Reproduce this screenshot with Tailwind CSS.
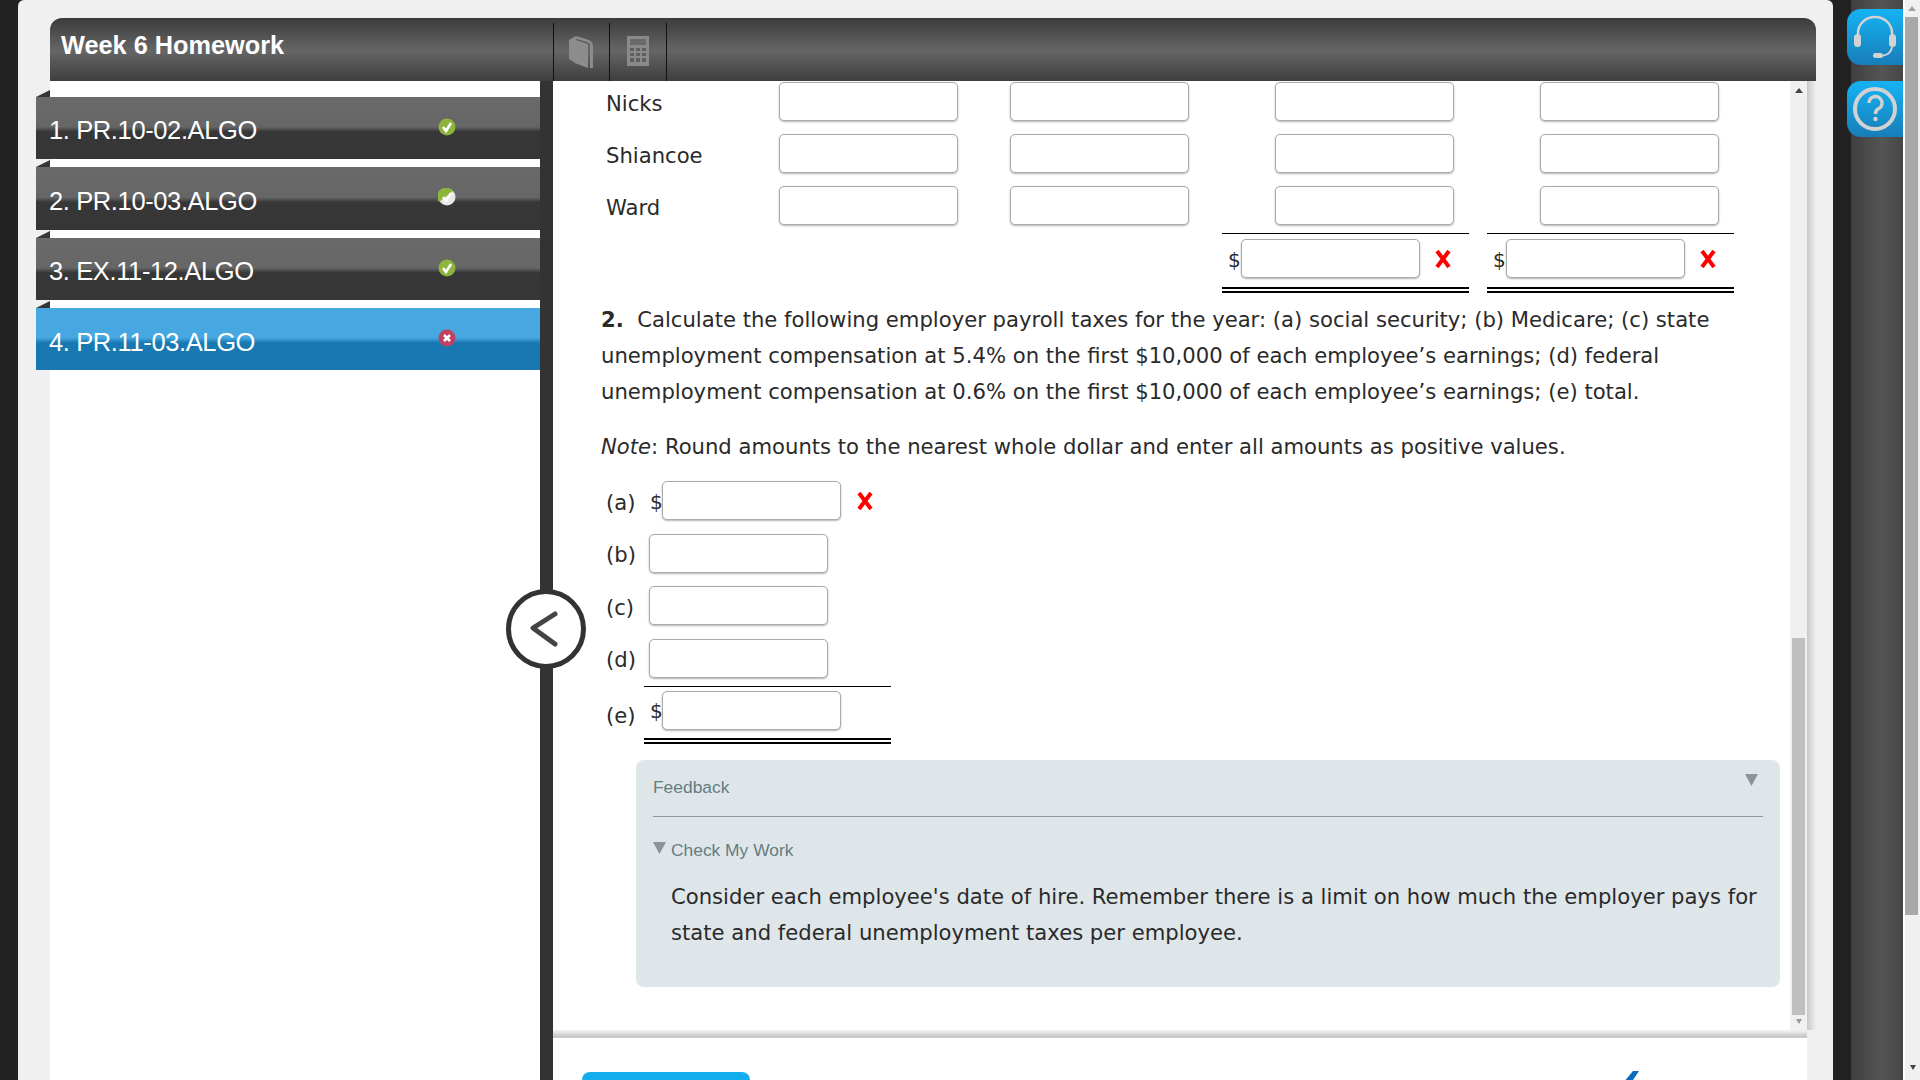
<!doctype html>
<html><head><meta charset="utf-8"><script src="https://cdn.jsdelivr.net/npm/@tailwindcss/browser@4"></script></head>
<body class="m-0 overflow-hidden">
<div class="flex w-[1920px] h-[1080px] overflow-hidden bg-[#222] font-['DejaVu_Sans',sans-serif] text-[21.15px] leading-[36px] text-[#2a2a2a]">
  <div class="w-[18px] shrink-0 bg-[#222]"></div>
  <div class="w-[1815px] shrink-0 bg-[#f0f0f0] rounded-t-[6px] pl-[32px] pr-[17px] pt-[18px] flex flex-col">
    <!-- header -->
    <div class="h-[63px] shrink-0 flex rounded-t-[12px] bg-[linear-gradient(#3b3b3b,#666_52%,#5d5d5d_62%,#3e3e3e)]">
      <div class="w-[503px] shrink-0 pl-[11px] pt-[9px] font-['Liberation_Sans',sans-serif] font-bold text-[25.3px] leading-[36px] text-white">Week 6 Homework</div>
      <div class="w-[57px] h-[58px] mt-[5px] border-x border-[#111] flex items-center justify-center">
        <svg class="-ml-[2px]" width="26" height="34" viewBox="0 0 26 34"><path d="M1 5 L8 1 L21 5 Q25 7 25 11 L25 33 L22 33 L22 10 Q22 8 19 7 L8 4 L8 5 L20 9 L20 33 L7 28 L1 24 Z" fill="#8c8c8c"/></svg>
      </div>
      <div class="w-[57px] h-[58px] mt-[5px] border-r border-[#111] flex items-center justify-center">
        <svg class="-mt-[2px]" width="22" height="30" viewBox="0 0 22 30"><rect width="22" height="30" fill="#8a8a8a"/><rect x="3" y="3" width="16" height="6" fill="#6a6a6a"/><g fill="#5f5f5f"><rect x="3" y="12" width="4" height="3"/><rect x="9" y="12" width="4" height="3"/><rect x="15" y="12" width="4" height="3"/><rect x="3" y="17" width="4" height="3"/><rect x="9" y="17" width="4" height="3"/><rect x="15" y="17" width="4" height="3"/><rect x="3" y="22" width="4" height="4"/><rect x="9" y="22" width="4" height="4"/><rect x="15" y="22" width="4" height="4"/></g></svg>
      </div>
    </div>
    <!-- body -->
    <div class="flex-1 flex min-h-0 relative">
      <!-- sidebar -->
      <div class="w-[490px] shrink-0 bg-white pt-[16px] flex flex-col gap-[8.2px] font-['Liberation_Sans',sans-serif] text-[25.5px] tracking-[-0.38px] text-white">
        <div class="relative -ml-[14px] h-[62.2px] bg-[linear-gradient(#6a6a6a,#666_48%,#373737_56%,#363636)] flex items-center pl-[13px] pt-[3px]">
          <div class="absolute left-0 -top-[7px] w-0 h-0 border-l-[14px] border-l-transparent border-b-[7px] border-b-[#363636]"></div>
          <span>1. PR.10-02.ALGO</span>
          <svg class="absolute left-[402px] top-[21px]" width="18" height="18" viewBox="0 0 18 18"><circle cx="9" cy="9" r="8.5" fill="#8db43c"/><path d="M5 9 L8 13 L13 5" fill="none" stroke="#fff" stroke-width="2.6"/></svg>
        </div>
        <div class="relative -ml-[14px] h-[62.2px] bg-[linear-gradient(#6a6a6a,#666_48%,#373737_56%,#363636)] flex items-center pl-[13px] pt-[5px]">
          <div class="absolute left-0 -top-[7px] w-0 h-0 border-l-[14px] border-l-transparent border-b-[7px] border-b-[#363636]"></div>
          <span>2. PR.10-03.ALGO</span>
          <svg class="absolute left-[402px] top-[21px]" width="18" height="18" viewBox="0 0 18 18"><circle cx="9" cy="9" r="8.5" fill="#e8e8e8"/><path d="M1 14 A8.5 8.5 0 0 1 15 3 Z" fill="#8db43c"/><path d="M5 9 L8 13 L13 5" fill="none" stroke="#fff" stroke-width="2.4"/></svg>
        </div>
        <div class="relative -ml-[14px] h-[62.2px] bg-[linear-gradient(#6a6a6a,#666_48%,#373737_56%,#363636)] flex items-center pl-[13px] pt-[5px]">
          <div class="absolute left-0 -top-[7px] w-0 h-0 border-l-[14px] border-l-transparent border-b-[7px] border-b-[#363636]"></div>
          <span>3. EX.11-12.ALGO</span>
          <svg class="absolute left-[402px] top-[21px]" width="18" height="18" viewBox="0 0 18 18"><circle cx="9" cy="9" r="8.5" fill="#8db43c"/><path d="M5 9 L8 13 L13 5" fill="none" stroke="#fff" stroke-width="2.6"/></svg>
        </div>
        <div class="relative -ml-[14px] h-[62.2px] bg-[linear-gradient(#47a7e0,#47a7e0_48%,#1879b2_56%,#1879b2)] flex items-center pl-[13px] pt-[5px]">
          <div class="absolute left-0 -top-[7px] w-0 h-0 border-l-[14px] border-l-transparent border-b-[7px] border-b-[#363636]"></div>
          <span>4. PR.11-03.ALGO</span>
          <svg class="absolute left-[402px] top-[21px]" width="18" height="18" viewBox="0 0 18 18"><circle cx="9" cy="9" r="8.5" fill="#c0405f"/><path d="M6 6 L12 12 M12 6 L6 12" fill="none" stroke="#fff" stroke-width="2.6"/></svg>
        </div>
      </div>
      <div class="w-[13px] shrink-0 bg-[#333]"></div>
      <!-- collapse handle -->
      <div class="absolute left-[456px] top-[508px] w-[80px] h-[80px] rounded-full bg-white border-[5px] border-[#333] flex items-center justify-center">
        <svg class="-ml-[5px]" width="30" height="36" viewBox="0 0 30 36"><path d="M26 3 L4 17 L26 33" fill="none" stroke="#444" stroke-width="5" stroke-linecap="round" stroke-linejoin="round"/></svg>
      </div>
      <!-- main -->
      <div class="w-[1263px] shrink-0 flex flex-col min-h-0">
        <div class="h-[949px] shrink-0 flex bg-[#c9c9c9]">
          <div class="w-[1237px] shrink-0 bg-white pt-px pl-[48px] overflow-hidden">
            <div class="flex flex-col gap-[13px]">
              <div class="flex h-[39px] items-center"><div class="w-[178px] pl-[5px] pt-[5px]">Nicks</div><input class="w-[179px] h-[39px] bg-white border border-[#aaa] rounded-[5px] shadow-[0_1px_2px_rgba(0,0,0,0.3)]"><input class="w-[179px] h-[39px] ml-[52px] bg-white border border-[#aaa] rounded-[5px] shadow-[0_1px_2px_rgba(0,0,0,0.3)]"><input class="w-[179px] h-[39px] ml-[86px] bg-white border border-[#aaa] rounded-[5px] shadow-[0_1px_2px_rgba(0,0,0,0.3)]"><input class="w-[179px] h-[39px] ml-[86px] bg-white border border-[#aaa] rounded-[5px] shadow-[0_1px_2px_rgba(0,0,0,0.3)]"></div>
              <div class="flex h-[39px] items-center"><div class="w-[178px] pl-[5px] pt-[5px]">Shiancoe</div><input class="w-[179px] h-[39px] bg-white border border-[#aaa] rounded-[5px] shadow-[0_1px_2px_rgba(0,0,0,0.3)]"><input class="w-[179px] h-[39px] ml-[52px] bg-white border border-[#aaa] rounded-[5px] shadow-[0_1px_2px_rgba(0,0,0,0.3)]"><input class="w-[179px] h-[39px] ml-[86px] bg-white border border-[#aaa] rounded-[5px] shadow-[0_1px_2px_rgba(0,0,0,0.3)]"><input class="w-[179px] h-[39px] ml-[86px] bg-white border border-[#aaa] rounded-[5px] shadow-[0_1px_2px_rgba(0,0,0,0.3)]"></div>
              <div class="flex h-[39px] items-center"><div class="w-[178px] pl-[5px] pt-[5px]">Ward</div><input class="w-[179px] h-[39px] bg-white border border-[#aaa] rounded-[5px] shadow-[0_1px_2px_rgba(0,0,0,0.3)]"><input class="w-[179px] h-[39px] ml-[52px] bg-white border border-[#aaa] rounded-[5px] shadow-[0_1px_2px_rgba(0,0,0,0.3)]"><input class="w-[179px] h-[39px] ml-[86px] bg-white border border-[#aaa] rounded-[5px] shadow-[0_1px_2px_rgba(0,0,0,0.3)]"><input class="w-[179px] h-[39px] ml-[86px] bg-white border border-[#aaa] rounded-[5px] shadow-[0_1px_2px_rgba(0,0,0,0.3)]"></div>
            </div>
            <div class="flex mt-[8px] ml-[621px] gap-[18px]">
              <div class="w-[247px] h-[60px] border-t border-t-black border-b-[6px] border-b-black [border-bottom-style:double] flex items-center pl-[6px] pb-[4px]"><span class="w-[13px] text-[20px] pt-[2px]">$</span><input class="w-[179px] h-[39px] bg-white border border-[#aaa] rounded-[5px] shadow-[0_1px_2px_rgba(0,0,0,0.3)]"><svg class="ml-[15px]" width="16" height="18" viewBox="0 0 16 18"><path d="M2 1 L14 17 M14 1 L2 17" stroke="#f00" stroke-width="4"/></svg></div>
              <div class="w-[247px] h-[60px] border-t border-t-black border-b-[6px] border-b-black [border-bottom-style:double] flex items-center pl-[6px] pb-[4px]"><span class="w-[13px] text-[20px] pt-[2px]">$</span><input class="w-[179px] h-[39px] bg-white border border-[#aaa] rounded-[5px] shadow-[0_1px_2px_rgba(0,0,0,0.3)]"><svg class="ml-[15px]" width="16" height="18" viewBox="0 0 16 18"><path d="M2 1 L14 17 M14 1 L2 17" stroke="#f00" stroke-width="4"/></svg></div>
            </div>
            <p class="mt-[9px] w-[1150px]"><b>2.</b>&nbsp; Calculate the following employer payroll taxes for the year: (a) social security; (b) Medicare; (c) state unemployment compensation at 5.4% on the first $10,000 of each employee’s earnings; (d) federal unemployment compensation at 0.6% on the first $10,000 of each employee’s earnings; (e) total.</p>
            <p class="mt-[19px]"><i>Note</i>: Round amounts to the nearest whole dollar and enter all amounts as positive values.</p>
            <div class="mt-[16px] ml-[5px] flex flex-col gap-[13.5px]">
              <div class="flex h-[39px] items-center"><span class="w-[44px] pt-[4px]">(a)</span><span class="w-[12px] pt-[2px] text-[20px]">$</span><input class="w-[179px] h-[39px] bg-white border border-[#aaa] rounded-[5px] shadow-[0_1px_2px_rgba(0,0,0,0.3)]"><svg class="ml-[16px]" width="16" height="18" viewBox="0 0 16 18"><path d="M2 1 L14 17 M14 1 L2 17" stroke="#f00" stroke-width="4"/></svg></div>
              <div class="flex h-[39px] items-center"><span class="w-[43px] pt-[4px]">(b)</span><input class="w-[179px] h-[39px] bg-white border border-[#aaa] rounded-[5px] shadow-[0_1px_2px_rgba(0,0,0,0.3)]"></div>
              <div class="flex h-[39px] items-center"><span class="w-[43px] pt-[4px]">(c)</span><input class="w-[179px] h-[39px] bg-white border border-[#aaa] rounded-[5px] shadow-[0_1px_2px_rgba(0,0,0,0.3)]"></div>
              <div class="flex h-[39px] items-center"><span class="w-[43px] pt-[4px]">(d)</span><input class="w-[179px] h-[39px] bg-white border border-[#aaa] rounded-[5px] shadow-[0_1px_2px_rgba(0,0,0,0.3)]"></div>
            </div>
            <div class="flex items-center mt-[8px] ml-[5px]">
              <span class="w-[38px] pt-[2px]">(e)</span>
              <div class="w-[247px] h-[58px] border-t border-t-black border-b-[6px] border-b-black [border-bottom-style:double] flex items-center pl-[6px] pb-[3px]"><span class="w-[12px] text-[20px]">$</span><input class="w-[179px] h-[39px] bg-white border border-[#aaa] rounded-[5px] shadow-[0_1px_2px_rgba(0,0,0,0.3)]"></div>
            </div>
            <div class="relative ml-[35px] mt-[16px] w-[1144px] h-[227px] rounded-[8px] bg-[#dfe6e9] px-[17px] pt-[15px]">
              <div class="font-['Liberation_Sans',sans-serif] text-[17.4px] leading-[24px] text-[#647c82] h-[42px] border-b border-[#8f989b]">Feedback</div>
              <svg class="absolute right-[22px] top-[14px]" width="13" height="12" viewBox="0 0 13 12"><path d="M0 0 H13 L6.5 12 Z" fill="#8a9499"/></svg>
              <div class="flex items-center mt-[21px] h-[24px] font-['Liberation_Sans',sans-serif] text-[17.4px] leading-[24px] text-[#647c82]"><svg class="mr-[5px] -mt-[4px]" width="13" height="12" viewBox="0 0 13 12"><path d="M0 0 H13 L6.5 12 Z" fill="#8a9499"/></svg>Check My Work</div>
              <p class="pl-[18px] mt-[17px] w-[1110px]">Consider each employee's date of hire. Remember there is a limit on how much the employer pays for state and federal unemployment taxes per employee.</p>
            </div>
          </div>
          <!-- inner scrollbar -->
          <div class="w-[17px] shrink-0 bg-[#f0f0f0] flex flex-col items-center relative">
            <div class="mt-[7px] w-0 h-0 border-x-[4px] border-x-transparent border-b-[5px] border-b-[#444]"></div>
            <div class="mt-[545px] w-[13px] h-[377px] bg-[#bfbfbf]"></div>
            <div class="mt-[4px] w-0 h-0 border-x-[3px] border-x-transparent border-t-[5px] border-t-[#999]"></div>
          </div>
          <div class="flex-1 bg-[linear-gradient(90deg,#c8c8c8,#f0f0f0)]"></div>
        </div>
        <div class="h-[7px] shrink-0 bg-[linear-gradient(#f4f4f4,#c4c4c4)] mr-[9px]"></div>
        <div class="flex-1 bg-white mr-[9px] pl-[29px] pt-[34px] relative border-t border-[#ccc]">
          <div class="w-[168px] h-[30px] rounded-t-[8px] bg-[#13aeef]"></div>
          <svg class="absolute left-[1068px] top-[33px]" width="22" height="12" viewBox="0 0 22 12"><path d="M2 12 L12 0 L18 0 L10 12 Z" fill="#0b6cc4"/></svg>
        </div>
      </div>
    </div>
  </div>
  <!-- right rail -->
  <div class="w-[18px] shrink-0 bg-[#222]"></div>
  <div class="w-[52px] shrink-0 relative bg-[linear-gradient(90deg,#3f3f3f,#555_60%,#454545)]">
    <div class="absolute -left-[4px] top-[9px] w-[56px] h-[56px] rounded-l-[14px] bg-[linear-gradient(#15b3f4,#177db8)] flex items-center justify-center">
      <svg width="44" height="44" viewBox="0 0 44 44"><path d="M5 22 V18 A17 16 0 0 1 39 18 V22" fill="none" stroke="#d2d2d2" stroke-width="2.5"/><rect x="1" y="19" width="7" height="13" rx="3.5" fill="#d2d2d2"/><rect x="36" y="19" width="7" height="13" rx="3.5" fill="#d2d2d2"/><path d="M39 32 Q38 40 28 41" fill="none" stroke="#d2d2d2" stroke-width="2"/><rect x="20" y="38" width="10" height="5" rx="2.5" fill="#d2d2d2"/></svg>
    </div>
    <div class="absolute -left-[4px] top-[81px] w-[56px] h-[56px] rounded-l-[14px] bg-[linear-gradient(#15b3f4,#177db8)] flex items-center justify-center">
      <svg width="46" height="46" viewBox="0 0 46 46"><circle cx="23" cy="23" r="20" fill="none" stroke="#d2d2d2" stroke-width="4"/><path d="M17 17 A6.5 6.5 0 1 1 26 23 Q23.5 24.5 23.5 28" fill="none" stroke="#d2d2d2" stroke-width="3.5"/><circle cx="23.5" cy="33" r="2.2" fill="#d2d2d2"/></svg>
    </div>
  </div>
  <div class="w-[2px] shrink-0 bg-white"></div>
  <div class="w-[15px] shrink-0 bg-[#f0f0f0] flex flex-col items-center">
    <div class="mt-[6px] w-0 h-0 border-x-[4px] border-x-transparent border-b-[5px] border-b-[#a5a5a5] -ml-[2px]"></div>
    <div class="mt-[6px] w-[13px] h-[898px] bg-[#a8a8a8] -ml-[2px]"></div>
    <div class="mt-[150px] w-0 h-0 border-x-[3px] border-x-transparent border-t-[5px] border-t-[#444]"></div>
  </div>
</div>
</body></html>
